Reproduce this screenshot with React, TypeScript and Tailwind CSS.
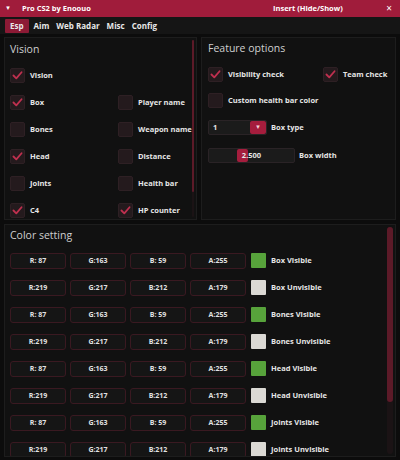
import React from "react";

const font = { fontFamily: '"Open Sans", "Liberation Sans", sans-serif' };

function Check({ on }: { on: boolean }) {
  return (
    <div className="w-[15px] h-[15px] shrink-0 rounded-[2px] bg-[#241a1d] border border-[#2e2024] flex items-center justify-center">
      {on && (
        <svg viewBox="0 0 16 16" className="w-[13px] h-[13px]">
          <polyline points="3,8 6.5,11.5 13,4" fill="none" stroke="#c0304f" strokeWidth="2.2" strokeLinecap="round" strokeLinejoin="round" />
        </svg>
      )}
    </div>
  );
}

function Item({ on, label, w }: { on: boolean; label: string; w?: string }) {
  return (
    <div className={`flex items-center gap-[5px] shrink-0 ${w ?? ""}`}>
      <Check on={on} />
      <span className="text-[7.5px] font-bold text-[#e6e6e6] whitespace-nowrap">{label}</span>
    </div>
  );
}

const visible = ["R: 87", "G:163", "B: 59", "A:255"];
const unvisible = ["R:219", "G:217", "B:212", "A:179"];
const rows = ["Box", "Bones", "Head", "Joints"].flatMap((n) => [
  { vals: visible, color: "bg-[#57a33b]", label: `${n} Visible` },
  { vals: unvisible, color: "bg-[#dbd9d4]", label: `${n} Unvisible` },
]);

export default function App() {
  return (
    <div className="w-[400px] h-[460px] bg-[#0c0c0c] flex flex-col overflow-hidden" style={font}>
      {/* title */}
      <div className="h-[17px] shrink-0 bg-[#a01c3b] flex items-center px-[5px] text-white text-[7.5px] font-bold">
        <span className="text-[6px] w-[17px]">▼</span>
        <span className="w-[150px]">Pro CS2 by Enoouo</span>
        <span className="flex-1 pl-[101px]">Insert (Hide/Show)</span>
        <span className="text-[10px] font-normal pr-[3px]">×</span>
      </div>
      {/* tabs */}
      <div className="h-[17px] shrink-0 bg-[#151515] flex items-center px-[5px] gap-[3px] text-[8px] font-bold text-[#e8e8e8]">
        <span className="bg-[#8c1a35] px-[5px] h-[14px] flex items-center rounded-[1px]">Esp</span>
        <span className="px-[2px]">Aim</span>
        <span className="px-[2px]">Web Radar</span>
        <span className="px-[2px]">Misc</span>
        <span className="px-[2px]">Config</span>
      </div>
      <div className="flex-1 flex flex-col gap-[4px] px-[4px] pt-[3px] pb-[3px] min-h-0">
        <div className="h-[183px] shrink-0 flex gap-[4px]">
          {/* vision */}
          <div className="w-[193px] bg-[#111111] border border-[#1d1d1d] flex overflow-hidden">
            <div className="flex-1 pl-[5px] pt-[3px] flex flex-col">
              <div className="h-[18px] flex items-center text-[10.5px] text-[#cfcfcf]">Vision</div>
              <div className="flex flex-col gap-[12px] mt-[9px]">
                <div className="flex"><Item on label="Vision" w="w-[108px]" /></div>
                <div className="flex"><Item on label="Box" w="w-[108px]" /><Item on={false} label="Player name" /></div>
                <div className="flex"><Item on={false} label="Bones" w="w-[108px]" /><Item on={false} label="Weapon name" /></div>
                <div className="flex"><Item on label="Head" w="w-[108px]" /><Item on={false} label="Distance" /></div>
                <div className="flex"><Item on={false} label="Joints" w="w-[108px]" /><Item on={false} label="Health bar" /></div>
                <div className="flex"><Item on label="C4" w="w-[108px]" /><Item on label="HP counter" /></div>
              </div>
            </div>
            <div className="w-[6px] mr-[2px] my-[2px] bg-[#1b1315] rounded-sm flex flex-col">
              <div className="h-[152px] bg-[#5c1a28] rounded-sm" />
            </div>
          </div>
          {/* feature options */}
          <div className="flex-1 bg-[#111111] border border-[#1d1d1d] pl-[6px] pt-[2px] flex flex-col">
            <div className="h-[18px] flex items-center text-[10.5px] text-[#cfcfcf]">Feature options</div>
            <div className="flex mt-[9px]">
              <Item on label="Visibility check" w="w-[115px]" />
              <Item on label="Team check" />
            </div>
            <div className="flex mt-[11px]">
              <Item on={false} label="Custom health bar color" />
            </div>
            <div className="flex items-center mt-[12px] gap-[4px]">
              <div className="w-[59px] h-[15px] bg-[#1b1b1b] border border-[#2a2326] rounded-[2px] flex items-center">
                <span className="flex-1 pl-[4px] text-[7.5px] font-bold text-[#e6e6e6]">1</span>
                <div className="w-[16px] h-full bg-[#a51d3d] rounded-[2px] flex items-center justify-center text-[6px] text-[#f3d0d8]">▼</div>
              </div>
              <span className="text-[7.5px] font-bold text-[#e6e6e6]">Box type</span>
            </div>
            <div className="flex items-center mt-[13px] gap-[4px]">
              <div className="w-[87px] h-[15px] bg-[#1b1b1b] border border-[#2a2326] rounded-[2px] flex items-center relative">
                <div className="ml-[28px] w-[11px] h-[13px] bg-[#a51d3d] rounded-[2px]" />
                <span className="absolute inset-0 flex items-center justify-center text-[7.5px] font-bold text-[#e6e6e6]">2.500</span>
              </div>
              <span className="text-[7.5px] font-bold text-[#e6e6e6]">Box width</span>
            </div>
          </div>
        </div>
        {/* color setting */}
        <div className="flex-1 bg-[#111111] border border-[#1d1d1d] flex overflow-hidden min-h-0">
          <div className="flex-1 pl-[5px] pt-[3px] flex flex-col">
            <div className="h-[18px] flex items-center text-[10.5px] text-[#cfcfcf]">Color setting</div>
            <div className="flex flex-col gap-[11px] mt-[9px]">
              {rows.map((r, i) => (
                <div key={i} className="flex items-center">
                  <div className="flex gap-[4px]">
                    {r.vals.map((v, j) => (
                      <div key={j} className="w-[56px] h-[16px] bg-[#151515] border border-[#3a1921] rounded-[3px] flex items-center justify-center text-[7px] font-bold text-[#e2e2e2]">
                        {v}
                      </div>
                    ))}
                  </div>
                  <div className={`w-[15px] h-[15px] ml-[5px] rounded-[1px] ${r.color}`} />
                  <span className="ml-[5px] text-[7.5px] font-bold text-[#e6e6e6]">{r.label}</span>
                </div>
              ))}
            </div>
          </div>
          <div className="w-[6px] mr-[2px] my-[2px] bg-[#1b1315] rounded-sm flex flex-col">
            <div className="h-[175px] bg-[#5c1a28] rounded-sm" />
          </div>
        </div>
      </div>
    </div>
  );
}
